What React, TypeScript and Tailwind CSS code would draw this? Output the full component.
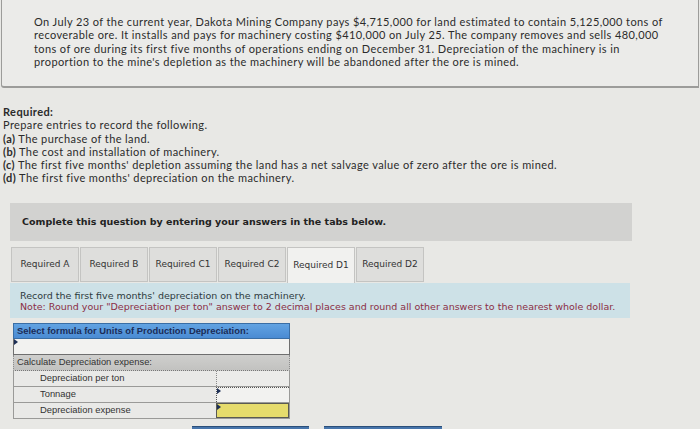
import React from 'react';

const tabs = ['Required A', 'Required B', 'Required C1', 'Required C2', 'Required D1', 'Required D2'];
const active = 'Required D1';

function Marker() {
  return <span className="absolute left-0 top-0 h-0 w-0 border-y-[3px] border-l-[4px] border-y-transparent border-l-[#1d2f55]" />;
}

export default function App() {
  return (
    <div className="h-[429px] w-[700px] overflow-hidden bg-[#e8e8e5] text-[#2b2b2b]">
      {/* problem statement */}
      <div className="mx-[1px] h-[88px] rounded-bl-[3px] border-b-2 border-l border-r border-[#9c9c9a] bg-[#ebebe9] pl-[32px] pr-[31px] pt-[15px] font-['Lato',sans-serif] text-[11px] leading-[13.4px] tracking-[0.4px]">
        On July 23 of the current year, Dakota Mining Company pays $4,715,000 for land estimated to contain 5,125,000 tons of recoverable ore. It installs and pays for machinery costing $410,000 on July 25. The company removes and sells 480,000 tons of ore during its first five months of operations ending on December 31. Depreciation of the machinery is in proportion to the mine's depletion as the machinery will be abandoned after the ore is mined.
      </div>

      <div className="mt-[17px] pl-[3px] font-['Lato',sans-serif] text-[11px] leading-[13.3px] tracking-[0.4px]">
        <p className="font-bold">Required:</p>
        <p>Prepare entries to record the following.</p>
        <p><b>(a)</b> The purchase of the land.</p>
        <p><b>(b)</b> The cost and installation of machinery.</p>
        <p><b>(c)</b> The first five months' depletion assuming the land has a net salvage value of zero after the ore is mined.</p>
        <p><b>(d)</b> The first five months' depreciation on the machinery.</p>
      </div>

      <div className="ml-[10px] mt-[18px] flex h-[38px] w-[622px] items-center bg-[#d2d2d0] pl-[12px] font-['DejaVu_Sans',sans-serif] text-[9.5px] font-bold text-[#222]">
        Complete this question by entering your answers in the tabs below.
      </div>

      <div className="ml-[11px] mt-[6px] flex gap-[1px] font-['DejaVu_Sans',sans-serif] text-[9px] text-[#333]">
        {tabs.map((t) => (
          <div
            key={t}
            className={
              t === active
                ? 'flex h-[36px] w-[68px] items-center justify-center border border-b-0 border-[#c4c4c2] bg-[#f1f1ef]'
                : 'flex h-[35px] w-[68px] items-center justify-center border border-[#c4c4c2] bg-[#dededc]'
            }
          >
            {t}
          </div>
        ))}
      </div>

      <div className="ml-[10px] h-[35px] w-[620px] bg-[#cde1e7] pl-[10px] pt-[7px] font-['DejaVu_Sans',sans-serif] text-[9.5px] leading-[11.5px] text-[#2e3a40]">
        <p>Record the first five months' depreciation on the machinery.</p>
        <p className="text-[#8b2e45]">Note: Round your "Depreciation per ton" answer to 2 decimal places and round all other answers to the nearest whole dollar.</p>
      </div>

      <div className="ml-[13px] mt-[5px] w-[277px] font-['Liberation_Sans',sans-serif] text-[9.4px] text-[#333]">
        <div className="flex h-[16px] items-center border border-[#3a6ea5] bg-gradient-to-b from-[#62a3e2] to-[#4a8bd3] pl-[3px] font-bold text-[#1b2c57]">
          Select formula for Units of Production Depreciation:
        </div>
        <div className="relative h-[16px] border-x border-b border-[#6f6f6f] bg-[#f2f2f0]">
          <Marker />
        </div>
        <div className="flex h-[16px] items-center border-x border-[#8c8c8c] border-b border-dotted border-b-[#777] bg-gradient-to-b from-[#cfcfcd] to-[#c2c2c0] pl-[3px]">
          Calculate Depreciation expense:
        </div>
        <div className="flex h-[16px] border-x border-b border-[#9a9a98] bg-[#e9e9e7]">
          <div className="flex flex-1 items-center pl-[26px]">Depreciation per ton</div>
          <div className="w-[73px] border-l border-dotted border-[#8a8a8a] bg-[#ececea]" />
        </div>
        <div className="flex h-[16px] border-x border-b border-[#9a9a98] bg-[#e9e9e7]">
          <div className="flex flex-1 items-center pl-[26px]">Tonnage</div>
          <div className="relative w-[73px] border-l border-t border-dotted border-[#555] bg-[#f2f2f0]">
            <Marker />
          </div>
        </div>
        <div className="flex h-[16px] border-x border-b border-[#9a9a98] bg-[#e9e9e7]">
          <div className="flex flex-1 items-center pl-[26px]">Depreciation expense</div>
          <div className="relative w-[73px] border border-[#5a5a52] bg-[#e6dc6c]">
            <Marker />
          </div>
        </div>
      </div>

      <div className="mt-[7px] flex">
        <div className="ml-[192px] h-[6px] w-[117px] border-t border-[#2b4f7a] bg-[#4775ab]" />
        <div className="ml-[15px] h-[6px] w-[118px] border-t border-[#2b4f7a] bg-[#4775ab]" />
      </div>
    </div>
  );
}
